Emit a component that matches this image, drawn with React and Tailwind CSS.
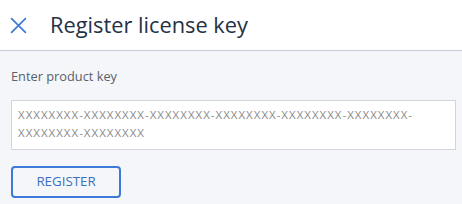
import React from 'react';

const App = () => {
  return (
    <div className="w-[462px] h-[204px] bg-[#f4f6f9] font-['Open_Sans',sans-serif] overflow-hidden">
      {/* Header */}
      <div className="h-[51px] bg-white border-b border-[#c3cad8] flex items-center pl-[10px]">
        <svg className="w-[17px] h-[17px] text-[#3b7ad6]" viewBox="0 0 16 16" fill="none" stroke="currentColor" strokeWidth="1.6" strokeLinecap="round">
          <path d="M1.5 1.5l13 13M14.5 1.5l-13 13" />
        </svg>
        <h1 className="ml-[23px] text-[21.8px] text-[#243143] leading-none">Register license key</h1>
      </div>

      {/* Body */}
      <div className="px-[11px] pt-[16px]">
        <div className="text-[12.8px] text-[#59616b] leading-[18px]">Enter product key</div>
        <div className="mt-[15px] w-[445px] h-[50px] bg-white border border-[#d2d6db] px-[6px] pt-[5px] text-[11.5px] leading-[18px] text-[#8a8a8a] tracking-[1px] whitespace-nowrap">
          XXXXXXXX-XXXXXXXX-XXXXXXXX-XXXXXXXX-XXXXXXXX-XXXXXXXX-
          <br />
          XXXXXXXX-XXXXXXXX
        </div>
        <button className="mt-[16px] w-[110px] h-[32px] border-2 border-[#3b7ad6] rounded-[4px] bg-transparent text-[#3b6fc0] text-[13.3px] font-medium leading-none">
          REGISTER
        </button>
      </div>
    </div>
  );
};

export default App;
